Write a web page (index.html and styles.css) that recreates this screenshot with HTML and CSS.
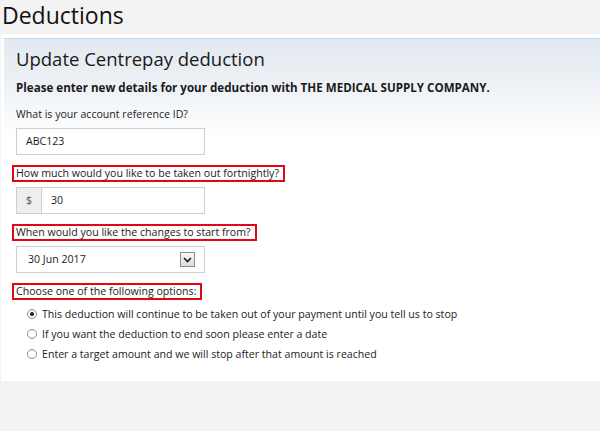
FILE: index.html
```html
<!DOCTYPE html>
<html>
<head>
<meta charset="utf-8">
<link rel="stylesheet" href="styles.css">
</head>
<body>
<h1 class="page-title">Deductions</h1>
<div class="outer">
  <div class="panel">
    <h2 class="panel-title">Update Centrepay deduction</h2>
    <p class="intro">Please enter new details for your deduction with THE MEDICAL SUPPLY COMPANY.</p>
    <div class="field">
      <div class="label">What is your account reference ID?</div>
      <div class="input">ABC123</div>
    </div>
    <div class="field">
      <div class="label hl">How much would you like to be taken out fortnightly?</div>
      <div class="input group"><span class="addon">$</span><span class="val">30</span></div>
    </div>
    <div class="field">
      <div class="label hl">When would you like the changes to start from?</div>
      <div class="input select"><span>30 Jun 2017</span>
        <span class="arrow"><svg width="9" height="6" viewBox="0 0 9 6"><path d="M1 1 L4.5 4.5 L8 1" fill="none" stroke="#1a1a1a" stroke-width="1.6"/></svg></span>
      </div>
    </div>
    <div class="field">
      <div class="label hl">Choose one of the following options:</div>
      <ul class="radios">
        <li><span class="radio on"></span>This deduction will continue to be taken out of your payment until you tell us to stop</li>
        <li><span class="radio"></span>If you want the deduction to end soon please enter a date</li>
        <li><span class="radio"></span>Enter a target amount and we will stop after that amount is reached</li>
      </ul>
    </div>
  </div>
</div>
</body>
</html>
```
FILE: styles.css
```css
html, body { margin: 0; padding: 0; }
body {
  background: #f3f3f3;
  font-family: "Open Sans", "DejaVu Sans", sans-serif;
  color: #1c1c1c;
  width: 600px;
  height: 431px;
  overflow: hidden;
}
.page-title {
  margin: 0;
  padding: 0 0 0 2px;
  font-size: 23px;
  font-weight: 400;
  line-height: 30px;
  height: 34px;
  color: #111;
}
.outer {
  background: #fff;
  margin-left: 1px;
  padding: 4px 0 0 3px;
  height: 343px;
}
.panel {
  border-top: 1px solid #bcdcee;
  background: linear-gradient(#e2e9f0 0px, #edf1f5 45px, #ffffff 100px);
  padding: 8px 0 0 12px;
  height: 334px;
}
.panel-title {
  margin: 0;
  font-size: 18.5px;
  font-weight: 400;
  line-height: 24px;
  color: #1a1a1a;
}
.intro {
  margin: 9px 0 0 0;
  font-size: 11.6px;
  font-weight: 700;
  line-height: 16px;
  color: #1a1a1a;
}
.field { margin-top: 10px; font-size: 10.6px; line-height: 13px; }
.label {
  display: block;
  width: fit-content;
  font-size: 10.6px;
  line-height: 13px;
  border: 2px solid transparent;
  margin-left: -4px;
  padding: 0 4px 0 2px;
}
.label.hl { border-color: #e30613; }
.input {
  margin-top: 5px;
  width: 178px;
  height: 25px;
  border: 1px solid #cfcfcf;
  background: #fff;
  font-size: 10.6px;
  line-height: 25px;
  padding-left: 9px;
}
.input.group { display: flex; padding-left: 0; width: 187px; }
.addon {
  width: 24px;
  background: #eeeeee;
  border-right: 1px solid #cfcfcf;
  text-align: center;
  color: #555;
}
.val { padding-left: 9px; }
.input.select {
  display: flex;
  justify-content: space-between;
  align-items: center;
  padding-left: 11px;
  width: 176px;
}
.arrow {
  width: 15px;
  height: 15px;
  border: 1px solid #8c8c8c;
  background: linear-gradient(#f7f7f7, #dedede);
  display: flex;
  align-items: center;
  justify-content: center;
  margin-right: 9px;
  box-sizing: border-box;
}
.radios {
  list-style: none;
  margin: 4px 0 0 0;
  padding: 0 0 0 11px;
  font-size: 10.6px;
}
.radios li {
  display: flex;
  align-items: center;
  height: 20px;
}
.radio {
  width: 8px;
  height: 8px;
  border: 1px solid #8a8a8a;
  border-radius: 50%;
  margin-right: 5px;
  background: #fff;
  position: relative;
  flex: none;
}
.radio.on::after {
  content: "";
  position: absolute;
  left: 2px; top: 2px;
  width: 4px; height: 4px;
  border-radius: 50%;
  background: #1a1a1a;
}
```
